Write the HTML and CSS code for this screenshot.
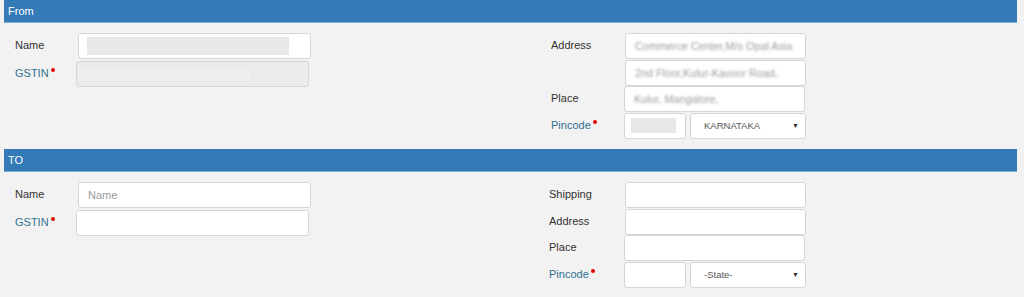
FILE: index.html
```html
<!DOCTYPE html>
<html>
<head>
<meta charset="utf-8">
<link rel="stylesheet" href="styles.css">
</head>
<body>
<div class="panel">
  <div class="panel-heading">From</div>
  <div class="panel-body">
    <div class="col-left">
      <div class="row"><label class="lbl">Name</label><div class="field"><span class="redact redact-name"></span></div></div>
      <div class="row"><label class="lbl info">GSTIN<span class="req"></span></label><div class="field disabled shift"><span class="redact redact-gst"></span></div></div>
    </div>
    <div class="col-right">
      <div class="row"><label class="lbl">Address</label><div class="field blur">Commerce Center,M/s Opal Asia</div></div>
      <div class="row"><label class="lbl"></label><div class="field blur">2nd Floor,Kulur-Kavoor Road,</div></div>
      <div class="row"><label class="lbl">Place</label><div class="field blur shift1">Kulur, Mangalore,</div></div>
      <div class="row"><label class="lbl info">Pincode<span class="req"></span></label>
        <div class="pin-group">
          <div class="field pin"><span class="redact redact-pin"></span></div>
          <div class="field select"><span>KARNATAKA</span><span class="arrow">▼</span></div>
        </div>
      </div>
    </div>
  </div>
</div>
<div class="panel">
  <div class="panel-heading">TO</div>
  <div class="panel-body">
    <div class="col-left">
      <div class="row"><label class="lbl">Name</label><input class="field" placeholder="Name"></div>
      <div class="row"><label class="lbl info">GSTIN<span class="req"></span></label><input class="field shift"></div>
    </div>
    <div class="col-right to">
      <div class="row"><label class="lbl">Shipping</label><input class="field"></div>
      <div class="row"><label class="lbl">Address</label><input class="field"></div>
      <div class="row"><label class="lbl">Place</label><input class="field shift1"></div>
      <div class="row"><label class="lbl info">Pincode<span class="req"></span></label>
        <div class="pin-group">
          <input class="field pin">
          <div class="field select"><span>-State-</span><span class="arrow">▼</span></div>
        </div>
      </div>
    </div>
  </div>
</div>
</body>
</html>
```

FILE: styles.css
```css
* { box-sizing: border-box; }
html, body { margin: 0; padding: 0; }
body {
  background: #f2f2f2;
  font-family: "Liberation Sans", Arial, sans-serif;
  font-size: 11px;
  color: #333;
  width: 1024px;
  height: 297px;
  overflow: hidden;
}
.panel {
  margin-left: 4px;
  width: 1013px;
}
.panel-heading {
  height: 23px;
  background: #337ab7;
  border-bottom: 1px solid #7aaedb;
  color: #fff;
  font-size: 11px;
  line-height: 22px;
  padding-left: 4px;
}
.panel-body {
  display: flex;
  padding: 10px 0 10px 11px;
}
.col-left {
  width: 536px;
  display: flex;
  flex-direction: column;
  gap: 2px;
}
.col-right {
  display: flex;
  flex-direction: column;
  gap: 0.67px;
}
.col-right.to .lbl { margin-left: -2px; width: 76px; }
.row {
  display: flex;
  align-items: center;
}
.col-left .lbl { width: 63px; }
.col-right .lbl { width: 74px; }
.lbl {
  color: #333;
  font-size: 11px;
  white-space: nowrap;
  margin-top: -2px;
}
.lbl.info { color: #31708f; }
.req {
  display: inline-block;
  width: 4px;
  height: 4px;
  border-radius: 50%;
  background: #e00000;
  margin-left: 2px;
  vertical-align: 5px;
}
.field {
  display: flex;
  align-items: center;
  height: 26px;
  background: #fff;
  border: 1px solid #d6d6d6;
  border-radius: 3px;
  font-family: "Liberation Sans", Arial, sans-serif;
  font-size: 11px;
  color: #555;
  padding: 0 9px;
  outline: none;
}
.col-left .field { width: 233px; }
.col-right .field { width: 181px; }
.shift { margin-left: -2px; }
.shift1 { margin-left: -1px; }
.field.disabled { background: #ebebeb; }
.field::placeholder { color: #999; }
.redact { display: block; background: #e8e8e8; }
.redact-name { width: 202px; height: 18px; margin-left: -1px; }
.redact-gst { width: 172px; height: 14px; margin-left: -8px; background: #eeeeee; }
.redact-pin { width: 51px; height: 15px; margin-left: -3px; }
.blur {
  color: transparent;
  text-shadow: 0 0 2.5px rgba(90, 90, 90, 0.6);
  font-size: 10.8px;
  white-space: nowrap;
  overflow: hidden;
}
.pin-group {
  display: flex;
  gap: 4px;
  margin-left: -1px;
}
.col-right .field.pin { width: 62px; }
.col-right .field.select {
  width: 116px;
  justify-content: space-between;
  padding: 0 6px 0 13px;
  font-size: 9.5px;
  color: #555;
}
.arrow {
  font-size: 7px;
  color: #333;
}
```
